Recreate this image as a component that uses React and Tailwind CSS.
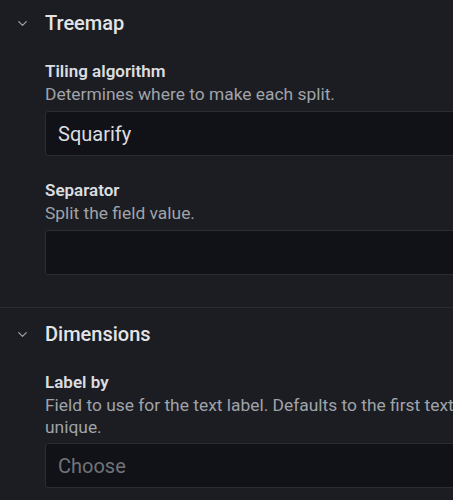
import { ChevronDown } from 'lucide-react';

function SectionHeader({ title }) {
  return (
    <div className="flex h-[46px] items-center">
      <div className="flex w-[45px] justify-start pl-[15px]">
        <ChevronDown size={15} strokeWidth={2} className="text-[#9da0a6]" />
      </div>
      <span className="text-[20px] font-medium text-[#e3e4e7]">{title}</span>
    </div>
  );
}

function Field({ label, description, value, placeholder, top = 'mt-[13px]' }) {
  return (
    <div className={top}>
      <div className="text-[17px] font-semibold leading-[24px] text-[#dcdde0]">{label}</div>
      <div className="text-[17.4px] leading-[23px] text-[#a0a3a9]">{description}</div>
      <div className="mt-[5px] flex h-[45px] w-[460px] items-center rounded-[3px] border border-[#2b2d33] bg-[#111217] px-[12px]">
        {value ? (
          <span className="text-[20px] text-[#dcdde0]">{value}</span>
        ) : (
          <span className="text-[20px] text-[#707379]">{placeholder}</span>
        )}
      </div>
    </div>
  );
}

export default function App() {
  return (
    <div
      className="h-[500px] w-[453px] overflow-hidden bg-[#1b1d22]"
      style={{ fontFamily: 'Roboto, "Liberation Sans", sans-serif' }}
    >
      <div className="pb-[32px]">
        <SectionHeader title="Treemap" />
        <div className="pl-[45px]">
          <Field
            label="Tiling algorithm"
            description="Determines where to make each split."
            value="Squarify"
          />
          <Field
            label="Separator"
            description="Split the field value."
            top="mt-[22px]"
          />
        </div>
      </div>
      <div className="border-t border-[#2a2c31] pt-[3px]">
        <SectionHeader title="Dimensions" />
        <div className="pl-[45px]">
          <Field
            label="Label by"
            description={
              <span className="block w-[500px] leading-[22px]">
                Field to use for the text label. Defaults to the first text
                <br />
                unique.
              </span>
            }
            placeholder="Choose"
          />
        </div>
      </div>
    </div>
  );
}
